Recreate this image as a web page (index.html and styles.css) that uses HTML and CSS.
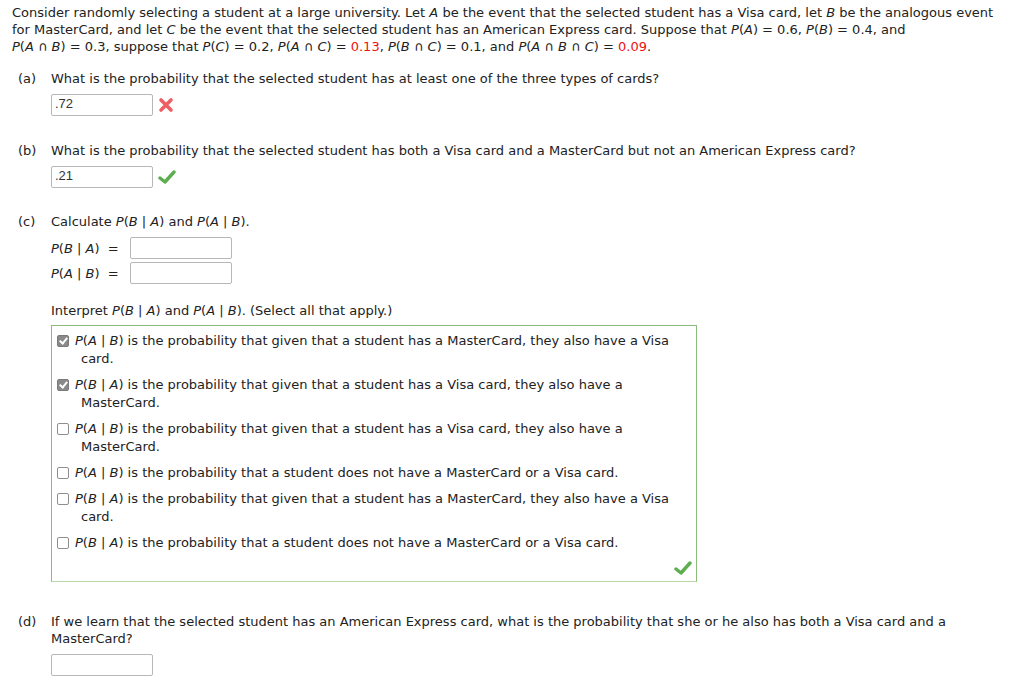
FILE: index.html
```html
<!DOCTYPE html>
<html>
<head>
<meta charset="utf-8">
<link rel="stylesheet" href="styles.css">
</head>
<body>
<div class="page">
  <p class="intro">Consider randomly selecting a student at a large university. Let <i>A</i> be the event that the selected student has a Visa card, let <i>B</i> be the analogous event for MasterCard, and let <i>C</i> be the event that the selected student has an American Express card. Suppose that <span class="nw"><i>P</i>(<i>A</i>) = 0.6</span>, <span class="nw"><i>P</i>(<i>B</i>) = 0.4</span>, and <span class="nw"><i>P</i>(<i>A</i> ∩ <i>B</i>) = 0.3</span>, suppose that <span class="nw"><i>P</i>(<i>C</i>) = 0.2</span>, <span class="nw"><i>P</i>(<i>A</i> ∩ <i>C</i>) = <span class="red">0.13</span></span>, <span class="nw"><i>P</i>(<i>B</i> ∩ <i>C</i>) = 0.1</span>, and <span class="nw"><i>P</i>(<i>A</i> ∩ <i>B</i> ∩ <i>C</i>) = <span class="red">0.09</span></span>.</p>

  <div class="part part-a">
    <span class="label">(a)</span>
    <div class="body">
      <p class="q">What is the probability that the selected student has at least one of the three types of cards?</p>
      <div class="answer">
        <span class="field">.72</span>
        <svg class="mark" width="16" height="16" viewBox="0 0 16 16"><path d="M3 3 L13 13 M13 3 L3 13" stroke="#ee5f63" stroke-width="3.6" stroke-linecap="round"/></svg>
      </div>
    </div>
  </div>

  <div class="part part-b">
    <span class="label">(b)</span>
    <div class="body">
      <p class="q">What is the probability that the selected student has both a Visa card and a MasterCard but not an American Express card?</p>
      <div class="answer">
        <span class="field">.21</span>
        <svg class="mark" width="18" height="16" viewBox="0 0 18 16"><path d="M2 9 L7 13 L16 3" fill="none" stroke="#5cae4e" stroke-width="3.4" stroke-linecap="round" stroke-linejoin="round"/></svg>
      </div>
    </div>
  </div>

  <div class="part part-c">
    <span class="label">(c)</span>
    <div class="body">
      <p class="q">Calculate <i>P</i>(<i>B</i> | <i>A</i>) and <i>P</i>(<i>A</i> | <i>B</i>).</p>
      <div class="calc">
        <div class="calc-row"><span class="calc-label"><i>P</i>(<i>B</i> | <i>A</i>) &nbsp;=</span><span class="field"></span></div>
        <div class="calc-row"><span class="calc-label"><i>P</i>(<i>A</i> | <i>B</i>) &nbsp;=</span><span class="field"></span></div>
      </div>
      <p class="q interp">Interpret <i>P</i>(<i>B</i> | <i>A</i>) and <i>P</i>(<i>A</i> | <i>B</i>). (Select all that apply.)</p>
      <div class="choices">
        <div class="choice"><span class="cb checked"></span><span class="ct"><i>P</i>(<i>A</i> | <i>B</i>) is the probability that given that a student has a MasterCard, they also have a Visa card.</span></div>
        <div class="choice"><span class="cb checked"></span><span class="ct"><i>P</i>(<i>B</i> | <i>A</i>) is the probability that given that a student has a Visa card, they also have a MasterCard.</span></div>
        <div class="choice"><span class="cb"></span><span class="ct"><i>P</i>(<i>A</i> | <i>B</i>) is the probability that given that a student has a Visa card, they also have a MasterCard.</span></div>
        <div class="choice"><span class="cb"></span><span class="ct"><i>P</i>(<i>A</i> | <i>B</i>) is the probability that a student does not have a MasterCard or a Visa card.</span></div>
        <div class="choice"><span class="cb"></span><span class="ct"><i>P</i>(<i>B</i> | <i>A</i>) is the probability that given that a student has a MasterCard, they also have a Visa card.</span></div>
        <div class="choice"><span class="cb"></span><span class="ct"><i>P</i>(<i>B</i> | <i>A</i>) is the probability that a student does not have a MasterCard or a Visa card.</span></div>
        <div class="choices-foot">
          <svg class="mark" width="18" height="16" viewBox="0 0 18 16"><path d="M2 9 L7 13 L16 3" fill="none" stroke="#5cae4e" stroke-width="3.4" stroke-linecap="round" stroke-linejoin="round"/></svg>
        </div>
      </div>
    </div>
  </div>

  <div class="part part-d">
    <span class="label">(d)</span>
    <div class="body">
      <p class="q">If we learn that the selected student has an American Express card, what is the probability that she or he also has both a Visa card and a MasterCard?</p>
      <div class="answer">
        <span class="field"></span>
      </div>
    </div>
  </div>
</div>
</body>
</html>
```

FILE: styles.css
```css
html, body {
  margin: 0;
  padding: 0;
  background: #ffffff;
}

body {
  font-family: "DejaVu Sans", Verdana, sans-serif;
  font-size: 13px;
  line-height: 17px;
  color: #222222;
}

.page {
  padding: 4px 12px 0 12px;
  width: 990px;
}

p {
  margin: 0;
}

.nw {
  white-space: nowrap;
}

.red {
  color: #ee1111;
}

.intro {
  margin-bottom: 15px;
}

.part {
  display: flex;
  padding-left: 6px;
}

.label {
  width: 33px;
  flex: none;
}

.body {
  flex: 1;
}

.answer {
  display: flex;
  align-items: center;
  gap: 5px;
  margin-top: 7px;
}

.field {
  display: inline-block;
  box-sizing: border-box;
  width: 102px;
  height: 22px;
  border: 1px solid #b7b7b7;
  border-radius: 2px;
  font-family: "Liberation Sans", Arial, sans-serif;
  font-size: 13px;
  line-height: 18px;
  padding: 0 3px;
  color: #333;
  background: #fff;
}

.mark {
  display: block;
}

.part-b {
  margin-top: 26px;
}

.part-c {
  margin-top: 25px;
}

.calc {
  margin-top: 7px;
  display: flex;
  flex-direction: column;
  gap: 3px;
}

.calc-row {
  display: flex;
  align-items: center;
}

.calc-label {
  width: 79px;
}

.interp {
  margin-top: 18px;
}

.choices {
  margin-top: 6px;
  width: 646px;
  box-sizing: border-box;
  border: 1px solid #8cba7a;
  border-bottom-color: #b9d9a8;
  padding: 6px 20px 5px 4px;
  line-height: 18px;
}

.choice {
  display: flex;
  align-items: flex-start;
  margin-bottom: 8px;
}

.cb {
  flex: none;
  box-sizing: border-box;
  width: 12px;
  height: 12px;
  margin: 3px 6px 0 1px;
  border: 1px solid #8e8e8e;
  border-radius: 2px;
  background: #fff;
  position: relative;
}

.cb.checked {
  background: #8a8a8a;
  border-color: #7a7a7a;
}

.cb.checked::after {
  content: "";
  position: absolute;
  left: 3px;
  top: 0px;
  width: 3px;
  height: 6px;
  border-right: 2px solid #fff;
  border-bottom: 2px solid #fff;
  transform: rotate(40deg);
}

.ct {
  flex: 1;
  padding-left: 6px;
  text-indent: -6px;
}

.choices-foot {
  display: flex;
  justify-content: flex-end;
  margin-top: 2px;
  margin-right: -16px;
}

.part-d {
  margin-top: 31px;
}
```
